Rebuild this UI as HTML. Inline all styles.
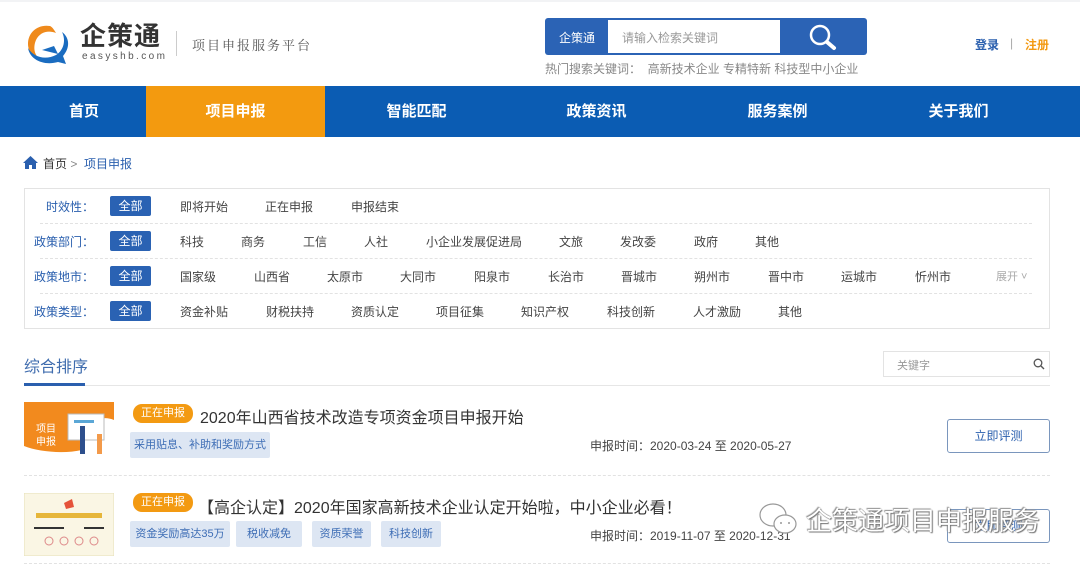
<!DOCTYPE html>
<html><head><meta charset="utf-8"><style>
*{margin:0;padding:0;box-sizing:border-box}
body{width:1080px;height:568px;overflow:hidden;background:#fff;font-family:"Liberation Sans","Noto Sans CJK SC",sans-serif;position:relative;color:#333}
.a{position:absolute;white-space:nowrap}
.nav{position:absolute;left:0;top:86px;width:1080px;height:51px;background:#0b5cb3}
.nav div{position:absolute;top:0;height:51px;line-height:51px;color:#fff;font-weight:bold;font-size:15px;text-align:center}
.lab{font-size:12px;color:#2a5fae;text-align:right;width:70px}
.all{background:#2a62b3;color:#fff;font-size:12px;width:41px;height:20px;line-height:20px;text-align:center;border-radius:2px}
.sep{position:absolute;left:40px;width:992px;border-top:1px dashed #e2e2e2}
.badge{background:#f39a12;color:#fff;font-size:11px;height:19px;line-height:19px;padding:0 8px;border-radius:9px}
.tag{background:#dde6f3;color:#3d6db5;font-size:11px;height:26px;line-height:26px;text-align:center;border-radius:2px}
.btn{border:1px solid #7a96bd;border-radius:3px;color:#2a5fae;font-size:12px;text-align:center;width:103px;height:34px;line-height:32px}
</style></head><body>
<div class="a" style="left:0;top:0;width:1080px;height:2px;background:#f2f3f5"></div>
<svg class="a" style="left:24px;top:22px" width="52" height="44" viewBox="0 0 52 44">
<path d="M26 4 C14 2 4 10 4 22 C4 30 10 36 16 37 C10 33 9 25 12 18 C16 10 24 8 32 11 C29 6 28 5 26 4Z" fill="#ef8a1c"/>
<path d="M4 26 C6 38 20 44 34 40 L42 42 L39 34 C46 26 46 16 38 10 C42 18 40 28 32 33 C22 38 10 36 4 26Z" fill="#1a6cc0"/>
<path d="M18 28 L30 24 L34 32 Z" fill="#1a6cc0"/>
</svg>
<div class="a" style="left:80px;top:23px;font-size:26px;line-height:1;font-weight:bold;color:#333;letter-spacing:1px">企策通</div>
<div class="a" style="left:82px;top:52px;font-size:10px;line-height:1;color:#555;letter-spacing:2.4px">easyshb.com</div>
<div class="a" style="left:176px;top:31px;width:1px;height:25px;background:#ccc"></div>
<div class="a" style="left:192px;top:35px;font-size:13px;color:#555;letter-spacing:2px;font-family:'Noto Serif CJK SC',serif">项目申报服务平台</div>
<div class="a" style="left:545px;top:18px;width:322px;height:37px;background:#2b63b5;border-radius:3px"></div>
<div class="a" style="left:559px;top:29px;font-size:12px;color:#fff">企策通</div>
<div class="a" style="left:608px;top:20px;width:172px;height:33px;background:#fff"></div>
<div class="a" style="left:622px;top:29px;font-size:12px;color:#999">请输入检索关键词</div>
<svg class="a" style="left:808px;top:23px" width="30" height="28" viewBox="0 0 30 28"><circle cx="12" cy="12" r="9" fill="none" stroke="#fff" stroke-width="2.5"/><path d="M19 19 L26 25" stroke="#fff" stroke-width="4" stroke-linecap="round"/></svg>
<div class="a" style="left:545px;top:60px;font-size:12px;color:#888">热门搜索关键词：&nbsp; 高新技术企业 专精特新 科技型中小企业</div>
<div class="a" style="left:975px;top:36px;font-size:12px;color:#2a5fae;font-weight:bold">登录</div>
<div class="a" style="left:1010px;top:36px;font-size:12px;color:#aaa">|</div>
<div class="a" style="left:1025px;top:36px;font-size:12px;color:#f39a12;font-weight:bold">注册</div>
<div class="nav">
<div style="left:0;width:168px">首页</div>
<div style="left:146px;width:179px;background:#f39a0f">项目申报</div>
<div style="left:326px;width:181px">智能匹配</div>
<div style="left:506px;width:181px">政策资讯</div>
<div style="left:687px;width:181px">服务案例</div>
<div style="left:868px;width:181px">关于我们</div>
</div>
<svg class="a" style="left:23px;top:156px" width="15" height="13" viewBox="0 0 15 13"><path d="M7.5 0 L15 7 L13 7 L13 13 L9 13 L9 9 L6 9 L6 13 L2 13 L2 7 L0 7Z" fill="#2a5fae"/></svg>
<div class="a" style="left:43px;top:155px;font-size:12px;color:#333">首页 <span style="color:#888">&gt;</span> <span style="color:#2a5fae">&nbsp;项目申报</span></div>
<div class="a" style="left:24px;top:188px;width:1026px;height:141px;border:1px solid #e3e3e3"></div>
<div class="sep" style="top:223px"></div><div class="sep" style="top:258px"></div><div class="sep" style="top:293px"></div>
<div class="a lab" style="left:24px;top:198px">时效性：</div>
<div class="a lab" style="left:24px;top:233px">政策部门：</div>
<div class="a lab" style="left:24px;top:268px">政策地市：</div>
<div class="a lab" style="left:24px;top:303px">政策类型：</div>
<div class="a all" style="left:110px;top:196px">全部</div>
<div class="a all" style="left:110px;top:231px">全部</div>
<div class="a all" style="left:110px;top:266px">全部</div>
<div class="a all" style="left:110px;top:301px">全部</div>
<div class="a" style="top:198px;left:0;font-size:12px;color:#444"><span class="a" style="left:180px">即将开始</span><span class="a" style="left:265px">正在申报</span><span class="a" style="left:351px">申报结束</span></div>
<div class="a" style="top:233px;left:0;font-size:12px;color:#444"><span class="a" style="left:180px">科技</span><span class="a" style="left:241px">商务</span><span class="a" style="left:303px">工信</span><span class="a" style="left:364px">人社</span><span class="a" style="left:426px">小企业发展促进局</span><span class="a" style="left:559px">文旅</span><span class="a" style="left:620px">发改委</span><span class="a" style="left:694px">政府</span><span class="a" style="left:755px">其他</span></div>
<div class="a" style="top:268px;left:0;font-size:12px;color:#444"><span class="a" style="left:180px">国家级</span><span class="a" style="left:254px">山西省</span><span class="a" style="left:327px">太原市</span><span class="a" style="left:400px">大同市</span><span class="a" style="left:474px">阳泉市</span><span class="a" style="left:548px">长治市</span><span class="a" style="left:621px">晋城市</span><span class="a" style="left:694px">朔州市</span><span class="a" style="left:768px">晋中市</span><span class="a" style="left:841px">运城市</span><span class="a" style="left:915px">忻州市</span><span class="a" style="left:996px;color:#aaa;font-size:11px">展开 ˅</span></div>
<div class="a" style="top:303px;left:0;font-size:12px;color:#444"><span class="a" style="left:180px">资金补贴</span><span class="a" style="left:266px">财税扶持</span><span class="a" style="left:351px">资质认定</span><span class="a" style="left:436px">项目征集</span><span class="a" style="left:521px">知识产权</span><span class="a" style="left:607px">科技创新</span><span class="a" style="left:693px">人才激励</span><span class="a" style="left:778px">其他</span></div>
<div class="a" style="left:24px;top:353px;font-size:16px;color:#3f6cae">综合排序</div>
<div class="a" style="left:24px;top:385px;width:1026px;height:1px;background:#e6e6e6"></div>
<div class="a" style="left:24px;top:383px;width:61px;height:3px;background:#2a5fae"></div>
<div class="a" style="left:883px;top:351px;width:167px;height:26px;border:1px solid #e3e3e3"></div>
<div class="a" style="left:897px;top:357px;font-size:11px;color:#999">关键字</div>
<svg class="a" style="left:1033px;top:358px" width="12" height="12" viewBox="0 0 12 12"><circle cx="5" cy="5" r="3.8" fill="none" stroke="#555" stroke-width="1.3"/><path d="M8 8 L11 11" stroke="#555" stroke-width="1.4"/></svg>
<svg class="a" style="left:24px;top:402px" width="90" height="60" viewBox="0 0 90 60"><rect width="90" height="60" fill="#fff"/><path d="M0 0 H90 V18 C70 10 60 30 58 48 C40 52 15 50 0 44Z" fill="#f28a1e"/><rect x="44" y="12" width="36" height="26" fill="#fff" stroke="#bbb"/><rect x="50" y="18" width="20" height="3" fill="#5ba7d6"/><text x="12" y="30" font-size="10" fill="#fff" font-family="Noto Sans CJK SC">项目</text><text x="12" y="43" font-size="10" fill="#fff" font-family="Noto Sans CJK SC">申报</text><rect x="56" y="24" width="5" height="28" fill="#2d4f8c"/><rect x="73" y="32" width="5" height="20" fill="#f39a4a"/></svg>
<div class="a badge" style="left:133px;top:404px">正在申报</div>
<div class="a" style="left:200px;top:404px;font-size:16px;color:#333">2020年山西省技术改造专项资金项目申报开始</div>
<div class="a tag" style="left:130px;top:432px;width:140px">采用贴息、补助和奖励方式</div>
<div class="a" style="left:590px;top:437px;font-size:12px;color:#444">申报时间：2020-03-24 至 2020-05-27</div>
<div class="a btn" style="left:947px;top:419px">立即评测</div>
<div class="a" style="left:24px;top:475px;width:1026px;border-top:1px dashed #e2e2e2"></div>
<svg class="a" style="left:24px;top:493px" width="90" height="63" viewBox="0 0 90 63"><rect width="90" height="63" fill="#faf6e4" stroke="#e6e0b8"/><path d="M40 10 L48 6 L50 14 L42 16Z" fill="#e5533a"/><rect x="12" y="20" width="66" height="5" fill="#e6b63a"/><rect x="10" y="34" width="30" height="2" fill="#333"/><rect x="60" y="34" width="20" height="2" fill="#333"/><circle cx="25" cy="48" r="4" fill="none" stroke="#d88"/><circle cx="40" cy="48" r="4" fill="none" stroke="#d88"/><circle cx="55" cy="48" r="4" fill="none" stroke="#d88"/><circle cx="70" cy="48" r="4" fill="none" stroke="#d88"/></svg>
<div class="a badge" style="left:133px;top:493px">正在申报</div>
<div class="a" style="left:198px;top:494px;font-size:16px;color:#333">【高企认定】2020年国家高新技术企业认定开始啦，中小企业必看！</div>
<div class="a tag" style="left:130px;top:521px;width:100px">资金奖励高达35万</div>
<div class="a tag" style="left:236px;top:521px;width:66px">税收减免</div>
<div class="a tag" style="left:312px;top:521px;width:59px">资质荣誉</div>
<div class="a tag" style="left:381px;top:521px;width:60px">科技创新</div>
<div class="a" style="left:590px;top:527px;font-size:12px;color:#444">申报时间：2019-11-07 至 2020-12-31</div>
<div class="a btn" style="left:947px;top:509px">立即评测</div>
<div class="a" style="left:24px;top:563px;width:1026px;border-top:1px dashed #e2e2e2"></div>
<svg class="a" style="left:757px;top:500px" width="44" height="40" viewBox="0 0 44 40"><ellipse cx="16" cy="15" rx="13" ry="11" fill="#fff" stroke="#999" stroke-width="1.2"/><ellipse cx="28" cy="24" rx="11" ry="9" fill="#fff" stroke="#999" stroke-width="1.2"/><circle cx="24" cy="23" r="1" fill="#999"/><circle cx="32" cy="23" r="1" fill="#999"/></svg>
<div class="a" style="left:806px;top:501px;font-size:26px;color:#fff;text-shadow:0 0 1px #666,1px 1px 1px #777,-1px -1px 1px #999">企策通项目申报服务</div>
</body></html>
